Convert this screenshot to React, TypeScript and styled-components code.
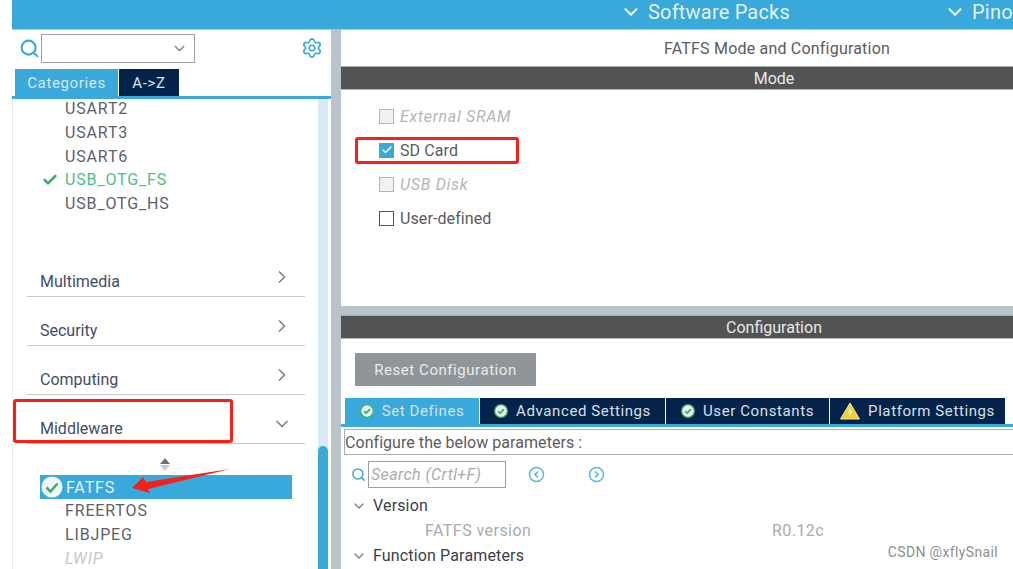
import React from 'react'
import styled, { createGlobalStyle } from 'styled-components'
import { Check, ChevronDown, ChevronRight, Search, Settings } from 'lucide-react'

const BLUE = '#39a9dc'
const NAVY = '#03234b'

const GlobalStyle = createGlobalStyle`
  html, body {
    margin: 0;
    padding: 0;
    width: 1013px;
    height: 569px;
    overflow: hidden;
    background: #fff;
  }
  body {
    font-family: Roboto, "Liberation Sans", sans-serif;
    color: #54565c;
  }
`

const Page = styled.div`
  position: relative;
  width: 1013px;
  height: 569px;
  overflow: hidden;
  padding-left: 12px;
  box-sizing: border-box;
`

const TopBar = styled.div`
  display: flex;
  width: 1300px;
  height: 30px;
  background: ${BLUE};
  border-bottom: 1px solid #8fd0ee;
  box-sizing: border-box;
  padding: 0 0 5px 608px;
  color: #e3f3fb;
  font-size: 20px;
`

const TopItem = styled.div`
  display: flex;
  align-items: center;
  gap: 6px;
  width: 324px;
  letter-spacing: 0.2px;
`

const Body = styled.div`
  display: flex;
  width: 1300px;
  height: 539px;
`

const Sidebar = styled.aside`
  display: flex;
  flex-direction: column;
  width: 319px;
  flex: none;
`

const SearchRow = styled.div`
  display: flex;
  align-items: center;
  height: 33px;
  box-sizing: border-box;
  padding: 3px 8px 0 7px;
`

const SearchIcon = styled(Search)`
  color: ${BLUE};
  flex: none;
`

const Combo = styled.div`
  display: flex;
  align-items: center;
  justify-content: flex-end;
  width: 154px;
  height: 29px;
  box-sizing: border-box;
  border: 1px solid #9b9fa3;
  margin-left: 1px;
  padding-right: 6px;
  color: #8d9296;
`

const Gear = styled(Settings)`
  color: ${BLUE};
  margin-left: auto;
`

const SideTabs = styled.div`
  display: flex;
  gap: 1px;
  height: 27px;
  flex: none;
  margin-top: 6px;
  padding-left: 3px;
  border-bottom: 3px solid ${BLUE};
`

const SideTab = styled.div<{ $active?: boolean }>`
  display: flex;
  align-items: center;
  justify-content: center;
  width: ${p => (p.$active ? '103px' : '60px')};
  background: ${p => (p.$active ? BLUE : NAVY)};
  color: #dbe6ee;
  font-size: 15px;
  letter-spacing: 0.65px;
`

const SideBody = styled.div`
  display: flex;
  flex: 1;
  min-height: 0;
  overflow: hidden;
  padding-left: 1px;
  border-left: 1px solid #e8ecef;
`

const Tree = styled.div`
  flex: 1;
  min-width: 0;
  margin-top: -2px;
`

const ItemList = styled.div`
  display: flex;
  flex-direction: column;
  padding-left: 26px;
`

const Item = styled.div<{ $state?: 'ok' | 'off' }>`
  position: relative;
  display: flex;
  align-items: center;
  flex: none;
  height: 23.7px;
  padding-left: 25px;
  font-size: 16px;
  letter-spacing: 0.85px;
  color: ${p => (p.$state === 'ok' ? '#4fbe7f' : p.$state === 'off' ? '#c3c8ce' : '#5e6068')};
  font-style: ${p => (p.$state === 'off' ? 'italic' : 'normal')};
`

const SelectedItem = styled(Item)`
  width: 252px;
  padding-left: 26px;
  box-sizing: border-box;
  background: ${BLUE};
  color: #e6f4fb;
`

const ItemCheck = styled(Check)`
  position: absolute;
  left: 2px;
  top: 4px;
  color: #3fae6d;
`

const SelectedBadge = styled.svg`
  position: absolute;
  left: 1px;
  top: 1px;
`

const Spacer = styled.div`
  height: 33px;
`

const Group = styled.div`
  display: flex;
  align-items: flex-end;
  justify-content: space-between;
  width: 278px;
  height: 48px;
  margin-left: 13px;
  margin-top: 1px;
  padding: 0 0 5px 13px;
  box-sizing: border-box;
  border-bottom: 1px solid #c3c9cc;
  font-size: 16px;
  color: #434c68;
`

const GroupChevron = styled.span`
  display: flex;
  margin-right: 13px;
  margin-bottom: 4px;
  color: #7b8085;
`

const SortMark = styled.div`
  display: flex;
  flex-direction: column;
  align-items: center;
  gap: 1px;
  width: 302px;
  margin: 14px 0 4px 0;
`

const SortUp = styled.div`
  flex: none;
  width: 0;
  height: 0;
  border-left: 5px solid transparent;
  border-right: 5px solid transparent;
  border-bottom: 6px solid #6d7073;
`

const SortDown = styled.div`
  flex: none;
  width: 0;
  height: 0;
  border-left: 5px solid transparent;
  border-right: 5px solid transparent;
  border-top: 6px solid #c9cccf;
`

const ScrollTrack = styled.div`
  display: flex;
  flex-direction: column;
  justify-content: flex-end;
  flex: none;
  width: 10px;
  margin-right: 3px;
  background: #d9e8f5;
`

const ScrollThumb = styled.div`
  height: 123px;
  background: ${BLUE};
  border-radius: 5px 5px 0 0;
`

const Main = styled.main`
  display: flex;
  flex-direction: column;
  width: 866px;
  flex: none;
  margin-left: 10px;
  box-shadow: -10px 0 0 #b9c4ca;
`

const Title = styled.div`
  display: flex;
  align-items: center;
  justify-content: center;
  height: 36px;
  padding-left: 6px;
  font-size: 16px;
  letter-spacing: 0.2px;
  color: #5a5c62;
`

const SectionBar = styled.div`
  display: flex;
  align-items: center;
  justify-content: center;
  height: 24px;
  flex: none;
  background: #525453;
  border-top: 1px solid #a9abab;
  border-bottom: 1px solid #b5b7b7;
  box-sizing: border-box;
  color: #e8e8e8;
  font-size: 16px;
`

const ModeList = styled.div`
  display: flex;
  flex-direction: column;
  height: 216px;
  padding: 9px 0 0 38px;
  box-sizing: border-box;
`

const ModeRow = styled.label<{ $off?: boolean }>`
  display: flex;
  align-items: center;
  gap: 6px;
  height: 34px;
  font-size: 16px;
  letter-spacing: ${p => (p.$off ? '0.7px' : '0.1px')};
  color: ${p => (p.$off ? '#b3b6ba' : '#595b63')};
  font-style: ${p => (p.$off ? 'italic' : 'normal')};
`

const Box = styled.span<{ $off?: boolean; $on?: boolean }>`
  display: flex;
  align-items: center;
  justify-content: center;
  width: 15px;
  height: 15px;
  box-sizing: border-box;
  flex: none;
  color: #fff;
  background: ${p => (p.$on ? BLUE : p.$off ? '#f0f1f2' : '#fff')};
  border: 1px solid ${p => (p.$on ? BLUE : p.$off ? '#b4b7b9' : '#55585a')};
`

const Splitter = styled.div`
  height: 9px;
  flex: none;
  background: #b9c4ca;
`

const ConfigBody = styled.div`
  display: flex;
  flex-direction: column;
`

const ResetButton = styled.button`
  align-self: flex-start;
  width: 181px;
  height: 33px;
  margin: 14px 0 0 14px;
  padding: 0;
  border: 0;
  background: #90959a;
  color: #e9eaeb;
  font-family: inherit;
  font-size: 15px;
  letter-spacing: 0.55px;
`

const ConfigTabs = styled.div`
  display: flex;
  gap: 1px;
  height: 29px;
  flex: none;
  margin-top: 12px;
  padding-left: 4px;
  border-bottom: 3px solid ${BLUE};
  box-sizing: border-box;
`

const ConfigTab = styled.div<{ $w: number; $active?: boolean }>`
  display: flex;
  align-items: center;
  justify-content: center;
  gap: 8px;
  width: ${p => p.$w}px;
  background: ${p => (p.$active ? BLUE : NAVY)};
  color: #d5e0e8;
  font-size: 15px;
  letter-spacing: 0.6px;
`

const ParamHint = styled.div`
  display: flex;
  align-items: center;
  height: 26px;
  flex: none;
  box-sizing: border-box;
  margin: 2px 0 0 3px;
  border: 1px solid #a9adb0;
  border-right: 0;
  font-size: 16px;
  letter-spacing: 0.05px;
  color: #5a5c62;
`

const FindRow = styled.div`
  display: flex;
  align-items: center;
  height: 27px;
  flex: none;
  margin: 6px 0 5px 0;
  padding-left: 10px;
`

const FindInput = styled.div`
  display: flex;
  align-items: center;
  width: 138px;
  height: 27px;
  margin-left: 2px;
  padding-left: 2px;
  box-sizing: border-box;
  border: 1px solid #9b9fa3;
  color: #a9acb0;
  font-style: italic;
  font-size: 16px;
  letter-spacing: 0.4px;
`

const NavButton = styled.svg<{ $first?: boolean }>`
  margin-left: ${p => (p.$first ? '22px' : '43px')};
`

const TreeHead = styled.div`
  display: flex;
  align-items: center;
  gap: 6px;
  height: 25px;
  padding-left: 10px;
  font-size: 16px;
  letter-spacing: 0.15px;
  color: #3a3f4a;
`

const ParamRow = styled.div`
  display: flex;
  align-items: center;
  height: 25px;
  padding-left: 84px;
  font-size: 16px;
  letter-spacing: 0.45px;
  color: #a8abaf;
`

const ParamName = styled.span`
  width: 347px;
`

// red marks pasted over the screenshot
const RedBox = styled.div<{ $x: number; $y: number; $w: number; $h: number }>`
  position: absolute;
  left: ${p => p.$x}px;
  top: ${p => p.$y}px;
  width: ${p => p.$w}px;
  height: ${p => p.$h}px;
  box-sizing: border-box;
  border: 3px solid #fa1e14;
  border-radius: 3px;
`

const Arrow = styled.svg`
  position: absolute;
  left: 125px;
  top: 460px;
`

const Watermark = styled.div`
  position: absolute;
  right: 15px;
  top: 544px;
  font-size: 14px;
  letter-spacing: 0.35px;
  color: #8f8f8f;
`

const OkBadge = ({ size = 14 }: { size?: number }) => (
  <svg width={size} height={size} viewBox="0 0 16 16">
    <circle cx="8" cy="8" r="8" fill="#3fae6d" />
    <circle cx="8" cy="8" r="6.5" fill="#e9f5ee" />
    <path d="M4.6 8.2l2.4 2.3 4.4-4.7" fill="none" stroke="#3fae6d" strokeWidth="2" />
  </svg>
)

const WarnBadge = () => (
  <svg width="20" height="18" viewBox="0 0 20 18">
    <path d="M10 1L19.5 17H.5z" fill="#f3cf2e" stroke="#f7e9a0" strokeWidth="1" />
    <path d="M10.6 5L8 10.5h2L9 15l3.4-6h-2z" fill="#fff" />
  </svg>
)

const CircleNav = ({ dir, first }: { dir: 'l' | 'r'; first?: boolean }) => (
  <NavButton $first={first} width="17" height="17" viewBox="0 0 17 17" fill="none" stroke="#55b8e4">
    <circle cx="8.5" cy="8.5" r="7" strokeWidth="1.5" />
    <path d={dir === 'l' ? 'M10 5.5l-3 3 3 3' : 'M7 5.5l3 3-3 3'} strokeWidth="1.6" />
  </NavButton>
)

const groups = ['Multimedia', 'Security', 'Computing', 'Middleware']

const App: React.FC = () => (
  <Page>
    <GlobalStyle />
    <TopBar>
      <TopItem><ChevronDown size={22} strokeWidth={2.4} />Software Packs</TopItem>
      <TopItem><ChevronDown size={22} strokeWidth={2.4} />Pinout</TopItem>
    </TopBar>
    <Body>
      <Sidebar>
        <SearchRow>
          <SearchIcon size={21} strokeWidth={2.4} />
          <Combo><ChevronDown size={17} /></Combo>
          <Gear size={22} strokeWidth={1.8} />
        </SearchRow>
        <SideTabs>
          <SideTab $active>Categories</SideTab>
          <SideTab>A-&gt;Z</SideTab>
        </SideTabs>
        <SideBody>
          <Tree>
            <ItemList>
              <Item>USART2</Item>
              <Item>USART3</Item>
              <Item>USART6</Item>
              <Item $state="ok"><ItemCheck size={16} strokeWidth={4} />USB_OTG_FS</Item>
              <Item>USB_OTG_HS</Item>
            </ItemList>
            <Spacer />
            {groups.map(g => (
              <Group key={g}>
                {g}
                <GroupChevron>
                  {g === 'Middleware' ? <ChevronDown size={20} /> : <ChevronRight size={20} />}
                </GroupChevron>
              </Group>
            ))}
            <SortMark><SortUp /><SortDown /></SortMark>
            <ItemList>
              <SelectedItem>
                <SelectedBadge width="22" height="22" viewBox="0 0 22 22">
                  <circle cx="11" cy="11" r="10.5" fill="#f2f7f4" />
                  <path d="M5.5 11.5l4 4 7-8" fill="none" stroke="#3fae6d" strokeWidth="2.6" />
                </SelectedBadge>
                FATFS
              </SelectedItem>
              <Item>FREERTOS</Item>
              <Item>LIBJPEG</Item>
              <Item $state="off">LWIP</Item>
            </ItemList>
          </Tree>
          <ScrollTrack><ScrollThumb /></ScrollTrack>
        </SideBody>
      </Sidebar>
      <Main>
        <Title>FATFS Mode and Configuration</Title>
        <SectionBar>Mode</SectionBar>
        <ModeList>
          <ModeRow $off><Box $off />External SRAM</ModeRow>
          <ModeRow><Box $on><Check size={12} strokeWidth={3} /></Box>SD Card</ModeRow>
          <ModeRow $off><Box $off />USB Disk</ModeRow>
          <ModeRow><Box />User-defined</ModeRow>
        </ModeList>
        <Splitter />
        <SectionBar>Configuration</SectionBar>
        <ConfigBody>
          <ResetButton>Reset Configuration</ResetButton>
          <ConfigTabs>
            <ConfigTab $w={134} $active><OkBadge />Set Defines</ConfigTab>
            <ConfigTab $w={185}><OkBadge />Advanced Settings</ConfigTab>
            <ConfigTab $w={163}><OkBadge />User Constants</ConfigTab>
            <ConfigTab $w={175}><WarnBadge />Platform Settings</ConfigTab>
          </ConfigTabs>
          <ParamHint>Configure the below parameters :</ParamHint>
          <FindRow>
            <SearchIcon size={15} strokeWidth={2.4} />
            <FindInput>Search (Crtl+F)</FindInput>
            <CircleNav dir="l" first />
            <CircleNav dir="r" />
          </FindRow>
          <TreeHead><ChevronDown size={16} color="#7b8085" />Version</TreeHead>
          <ParamRow><ParamName>FATFS version</ParamName>R0.12c</ParamRow>
          <TreeHead><ChevronDown size={16} color="#7b8085" />Function Parameters</TreeHead>
        </ConfigBody>
      </Main>
    </Body>
    <RedBox $x={355} $y={137} $w={164} $h={27} />
    <RedBox $x={13} $y={399} $w={220} $h={44} />
    <Arrow width="110" height="36" viewBox="0 0 110 36">
      <path d="M7 28L18 17l3 5L105 9 23 29l2 4z" fill="#f4201a" />
    </Arrow>
    <Watermark>CSDN @xflySnail</Watermark>
  </Page>
)

export default App
